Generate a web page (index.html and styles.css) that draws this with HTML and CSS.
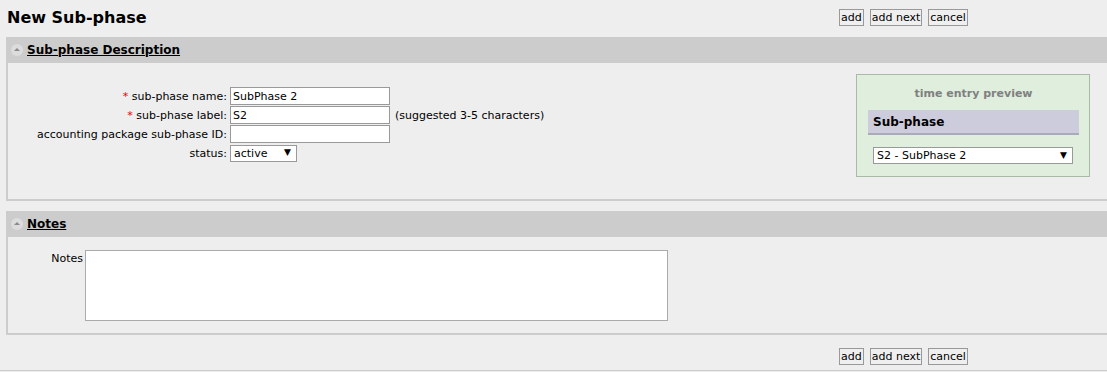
FILE: index.html
```html
<!DOCTYPE html>
<html lang="en">
<head>
  <meta charset="UTF-8" />
  <title>New Sub-phase</title>
  <link rel="stylesheet" href="styles.css">
</head>
<body>
  <div class="topbar">
    <h1>New Sub-phase</h1>
    <div class="actions">
      <button type="button">add</button>
      <button type="button">add next</button>
      <button type="button">cancel</button>
    </div>
  </div>

  <div class="section">
    <div class="section-head">
      <span class="toggle"></span>
      <a href="#" class="section-title">Sub-phase Description</a>
    </div>
    <div class="section-body desc-body">
      <div class="form-grid">
        <label class="lbl" for="name"><span class="req">*</span> sub-phase name:</label>
        <div class="fld"><input type="text" id="name" value="SubPhase 2" /></div>
        <label class="lbl" for="label"><span class="req">*</span> sub-phase label:</label>
        <div class="fld"><input type="text" id="label" value="S2" /><span class="hint">(suggested 3-5 characters)</span></div>
        <label class="lbl" for="acct">accounting package sub-phase ID:</label>
        <div class="fld"><input type="text" id="acct" value="" /></div>
        <label class="lbl" for="status">status:</label>
        <div class="fld"><span class="select-wrap status-wrap"><select id="status"><option>active</option><option>inactive</option></select></span></div>
      </div>
      <div class="preview">
        <div class="preview-title">time entry preview</div>
        <div class="preview-head">Sub-phase</div>
        <span class="select-wrap preview-wrap"><select><option>S2 - SubPhase 2</option></select></span>
      </div>
    </div>
  </div>

  <div class="section">
    <div class="section-head">
      <span class="toggle"></span>
      <a href="#" class="section-title">Notes</a>
    </div>
    <div class="section-body notes-body">
      <label class="notes-lbl" for="notes">Notes</label>
      <textarea id="notes"></textarea>
    </div>
  </div>

  <div class="topbar bottombar">
    <div></div>
    <div class="actions">
      <button type="button">add</button>
      <button type="button">add next</button>
      <button type="button">cancel</button>
    </div>
  </div>
  <div class="footer-line"></div>
</body>
</html>
```

FILE: styles.css
```css
body {
  background: #eeeeee;
  font-family: "DejaVu Sans", Verdana, sans-serif;
  font-size: 11px;
  color: #000;
  margin: 0;
  padding: 0 0 0 6px;
}
.topbar {
  display: grid;
  grid-template-columns: 1fr 268px;
  align-items: center;
  height: 37px;
}
h1 {
  font-size: 16px;
  font-weight: bold;
  margin: 0 0 0 1px;
  padding-bottom: 3px;
}
.actions {
  display: flex;
  gap: 6px;
  padding-bottom: 3px;
}
button {
  font-family: "DejaVu Sans", Verdana, sans-serif;
  font-size: 11px;
  height: 17px;
  padding: 0 1px;
  background: #efefef;
  border: 1px solid #999;
  color: #000;
  line-height: 15px;
}
.section {
  margin-bottom: 10px;
}
.section-head {
  background: #cccccc;
  height: 26px;
  display: flex;
  align-items: center;
  padding-left: 5px;
}
.toggle {
  width: 12px;
  height: 12px;
  border-radius: 50%;
  background: #dcdcdc;
  position: relative;
  margin-right: 4px;
}
.toggle::after {
  content: "";
  position: absolute;
  left: 3px;
  top: 4px;
  border-left: 3px solid transparent;
  border-right: 3px solid transparent;
  border-bottom: 3px solid #8a8a8a;
}
.section-title {
  font-size: 12px;
  font-weight: bold;
  color: #000;
  text-decoration: underline;
}
.section-body {
  border-left: 2px solid #cccccc;
  border-bottom: 2px solid #cccccc;
}
.desc-body {
  display: flex;
  justify-content: space-between;
  align-items: flex-start;
  padding-right: 17px;
  height: 136px;
}
.form-grid {
  display: grid;
  grid-template-columns: 219px auto;
  column-gap: 3px;
  row-gap: 1px;
  margin-top: 24px;
  align-items: center;
}
.lbl {
  text-align: right;
}
.req {
  color: #e00000;
}
.fld {
  display: flex;
  align-items: center;
}
input[type="text"] {
  font-family: "DejaVu Sans", Verdana, sans-serif;
  font-size: 11px;
  width: 160px;
  height: 18px;
  box-sizing: border-box;
  border: 1px solid #999;
  background: #fff;
  padding: 0 2px;
  margin: 0;
}
.hint {
  margin-left: 5px;
}
.select-wrap {
  position: relative;
  display: inline-block;
}
.select-wrap::after {
  content: "\25BC";
  position: absolute;
  right: 6px;
  top: 3px;
  font-size: 9px;
  pointer-events: none;
}
select {
  appearance: none;
  -webkit-appearance: none;
  font-family: "DejaVu Sans", Verdana, sans-serif;
  font-size: 11px;
  height: 17px;
  box-sizing: border-box;
  border: 1px solid #999;
  background: #fff;
  padding: 0 3px;
  margin: 0;
  color: #000;
}
.status-wrap select {
  width: 67px;
  margin-top: 1px;
}
.preview {
  margin-top: 11px;
  width: 234px;
  height: 103px;
  box-sizing: border-box;
  background: #dfeedd;
  border: 1px solid #a9bba7;
  padding: 0 10px 0 11px;
  display: flex;
  flex-direction: column;
}
.preview-title {
  text-align: center;
  color: #808080;
  font-weight: bold;
  margin-top: 12px;
  height: 23px;
}
.preview-head {
  background: #ccccdd;
  border-bottom: 2px solid #aaaabb;
  height: 23px;
  line-height: 24px;
  font-size: 12px;
  font-weight: bold;
  padding-left: 5px;
}
.preview-wrap {
  align-self: flex-start;
  margin: 12px 0 0 5px;
}
.preview-wrap select {
  width: 200px;
}
.notes-body {
  display: flex;
  align-items: flex-start;
  height: 98px;
  box-sizing: border-box;
  padding-top: 13px;
}
.notes-lbl {
  width: 75px;
  text-align: right;
  margin-right: 2px;
  padding-top: 2px;
}
textarea {
  width: 583px;
  height: 71px;
  box-sizing: border-box;
  border: 1px solid #aaa;
  background: #fff;
  resize: none;
  margin: 0;
}
.bottombar {
  height: 25px;
  align-items: start;
}
.bottombar .actions {
  padding-bottom: 0;
  padding-top: 3px;
}
.footer-line {
  border-top: 1px solid #cccccc;
  margin-left: -6px;
}
```
